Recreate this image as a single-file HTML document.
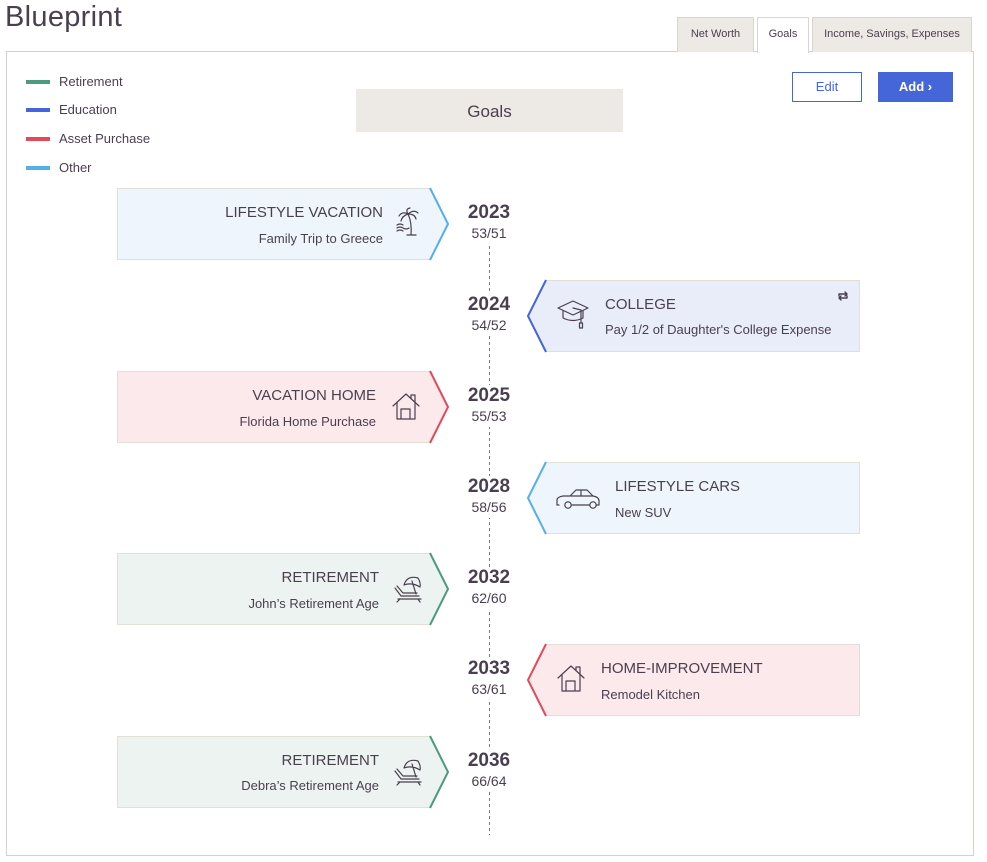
<!DOCTYPE html>
<html><head><meta charset="utf-8"><style>
*{margin:0;padding:0;box-sizing:border-box}
body{width:987px;height:862px;background:#fff;font-family:"Liberation Sans",sans-serif;color:#4a3f4f;position:relative;overflow:hidden}
.a{position:absolute;white-space:nowrap}
.tab{position:absolute;top:17px;height:35px;background:#ede9e4;border:1px solid #d9d5cf;border-bottom:none;font-size:11px;text-align:center;line-height:33px;color:#4a3f4f}
.t{font-size:15px}
.s{font-size:13px}
.yr{position:absolute;left:459px;width:60px;text-align:center;background:#fff}
.yr b{display:block;font-size:19px;line-height:21px}
.yr span{display:block;font-size:14px;line-height:21px}
.lg{position:absolute;left:26px;font-size:13px}
.lg i{display:inline-block;width:24px;height:4px;vertical-align:middle;margin-right:9px;margin-top:-2px}
</style></head><body>
<div class="a" style="left:5px;top:0;font-size:29px;line-height:34px;color:#4a3f4f;letter-spacing:0.3px">Blueprint</div>
<div style="position:absolute;left:6px;top:51px;width:968px;height:805px;border:1px solid #d6d2ca"></div>
<div class="tab" style="left:677px;width:77px">Net Worth</div>
<div class="tab" style="left:757px;width:52px;background:#fff;height:36px">Goals</div>
<div class="tab" style="left:812px;width:160px">Income, Savings, Expenses</div>

<div class="lg" style="top:74px"><i style="background:#4c9b7c"></i>Retirement</div>
<div class="lg" style="top:102px"><i style="background:#4466d9"></i>Education</div>
<div class="lg" style="top:131px"><i style="background:#e04b5b"></i>Asset Purchase</div>
<div class="lg" style="top:160px"><i style="background:#55b0e8"></i>Other</div>

<div class="a" style="left:356px;top:89px;width:267px;height:43px;background:#ede9e4;text-align:center;line-height:45px;font-size:17px">Goals</div>
<div class="a" style="left:792px;top:72px;width:70px;height:30px;border:1px solid #4466d9;color:#4466d9;text-align:center;line-height:28px;font-size:13px">Edit</div>
<div class="a" style="left:878px;top:72px;width:75px;height:30px;background:#4466d9;color:#fff;text-align:center;line-height:30px;font-size:13px;font-weight:bold">Add ›</div>

<svg class="a" style="left:0;top:0" width="987" height="862">
<line x1="489.5" y1="240" x2="489.5" y2="835" stroke="#777" stroke-dasharray="3,3" stroke-width="1"/>
<g stroke="#e2ded8" stroke-width="1">
<polygon points="117.5,188.5 430,188.5 448,224 430,259.5 117.5,259.5" fill="#eef5fd"/>
<polygon points="546,280.5 859.5,280.5 859.5,351.5 546,351.5 528,316" fill="#e9edf9"/>
<polygon points="117.5,371.5 430,371.5 448,407 430,442.5 117.5,442.5" fill="#fce9ec"/>
<polygon points="546,462.5 859.5,462.5 859.5,533.5 546,533.5 528,498" fill="#eef5fd"/>
<polygon points="117.5,553.5 430,553.5 448,589 430,624.5 117.5,624.5" fill="#ecf3f0"/>
<polygon points="546,644.5 859.5,644.5 859.5,715.5 546,715.5 528,680" fill="#fce9ec"/>
<polygon points="117.5,736.5 430,736.5 448,772 430,807.5 117.5,807.5" fill="#ecf3f0"/>
</g>
<g fill="none" stroke-width="2">
<polyline points="430,188 448,224 430,260" stroke="#55b0e8"/>
<polyline points="546,280 528,316 546,352" stroke="#4466d9"/>
<polyline points="430,371 448,407 430,443" stroke="#e04b5b"/>
<polyline points="546,462 528,498 546,534" stroke="#55b0e8"/>
<polyline points="430,553 448,589 430,625" stroke="#4c9b7c"/>
<polyline points="546,644 528,680 546,716" stroke="#e04b5b"/>
<polyline points="430,736 448,772 430,808" stroke="#4c9b7c"/>
</g>
<g fill="none" stroke="#4a3f4f" stroke-width="1.2" stroke-linecap="round" stroke-linejoin="round">
<g transform="translate(396,208)">
<path d="M12 6 Q16 14 15 27 M11 27 H20 M12 6 Q6 3 3 8 M12 6 Q9 1 14 0 M12 6 Q18 1 22 5 M12 6 Q19 6 20 11 M12 6 Q6 8 5 13 M1 17 q3 -2 6 0 M1 20 q3 -2 6 0 t6 0 M1 23 q3 -2 6 0"/>
</g>
<g transform="translate(557,299)">
<path d="M1 9 L16 2 L31 9 L16 16 Z M6 12 V19 Q16 24 26 19 V12 M16 9 L24 11 V24 M22.5 24 h3 v5 h-3z"/>
</g>
<g transform="translate(391,391)">
<path d="M2 15 L15 3 L28 15 M6 12 V28 H24 V12 M20 7 V4 H24 V11 M10 28 V18 H19 V27 M12 28 H8"/>
</g>
<g transform="translate(556,488)">
<path d="M3 17 H1 V12 Q1 9 7 8 L14 8 L20 2 L31 2 L37 8 Q43 9 43 13 V17 H40 M16 17 H34 M15 8 H37 M25 2 V8"/>
<circle cx="12" cy="17" r="3.2"/><circle cx="37" cy="17" r="3.2"/>
</g>
<g transform="translate(393,573)">
<path d="M11 12 Q14 2 25 5 Q28 10 27 14 Q19 9 11 12 Z M19 8 L23 21 M2 15 L8 23 L26 23 M4 13 L10 20 L24 20 M5 26 L28 26 M7 26 L4 29 M25 26 L27 29"/>
</g>
<g transform="translate(556,663)">
<path d="M2 15 L15 3 L28 15 M6 12 V28 H24 V12 M20 7 V4 H24 V11 M10 28 V18 H19 V27 M12 28 H8"/>
</g>
<g transform="translate(393,756)">
<path d="M11 12 Q14 2 25 5 Q28 10 27 14 Q19 9 11 12 Z M19 8 L23 21 M2 15 L8 23 L26 23 M4 13 L10 20 L24 20 M5 26 L28 26 M7 26 L4 29 M25 26 L27 29"/>
</g>
<g transform="translate(837,290)" stroke-width="1.4">
<path d="M2 6 V4 H10 M8 2 L10 4 L8 6 M10 6 V8 H2 M4 10 L2 8 L4 6"/>
</g>
</g>
</svg>

<div class="a t" style="right:604px;top:204px">LIFESTYLE VACATION</div>
<div class="a s" style="right:604px;top:231px">Family Trip to Greece</div>
<div class="a t" style="right:611px;top:387px">VACATION HOME</div>
<div class="a s" style="right:611px;top:414px">Florida Home Purchase</div>
<div class="a t" style="right:608px;top:569px">RETIREMENT</div>
<div class="a s" style="right:608px;top:596px">John’s Retirement Age</div>
<div class="a t" style="right:608px;top:752px">RETIREMENT</div>
<div class="a s" style="right:608px;top:778px">Debra’s Retirement Age</div>
<div class="a t" style="left:605px;top:296px">COLLEGE</div>
<div class="a s" style="left:605px;top:322px">Pay 1/2 of Daughter's College Expense</div>
<div class="a t" style="left:615px;top:478px">LIFESTYLE CARS</div>
<div class="a s" style="left:615px;top:505px">New SUV</div>
<div class="a t" style="left:601px;top:660px">HOME-IMPROVEMENT</div>
<div class="a s" style="left:601px;top:687px">Remodel Kitchen</div>

<div class="yr" style="top:202px"><b>2023</b><span>53/51</span></div>
<div class="yr" style="top:294px"><b>2024</b><span>54/52</span></div>
<div class="yr" style="top:385px"><b>2025</b><span>55/53</span></div>
<div class="yr" style="top:476px"><b>2028</b><span>58/56</span></div>
<div class="yr" style="top:567px"><b>2032</b><span>62/60</span></div>
<div class="yr" style="top:658px"><b>2033</b><span>63/61</span></div>
<div class="yr" style="top:750px"><b>2036</b><span>66/64</span></div>
</body></html>
